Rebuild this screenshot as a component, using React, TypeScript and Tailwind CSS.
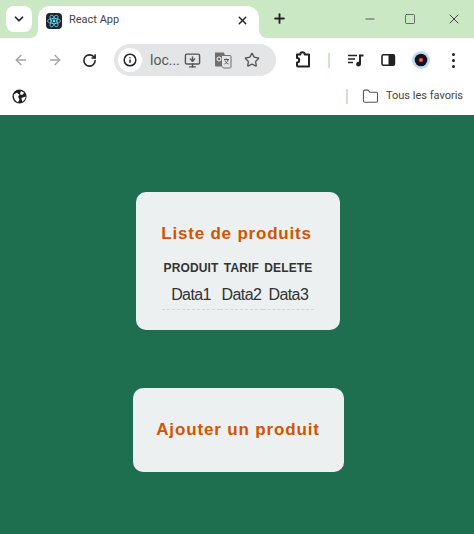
import React from 'react';
import { ArrowLeft, ArrowRight, ChevronDown, Folder, Info, Minus, MonitorDown, Plus, RotateCw, Square, Star, X } from 'lucide-react';

const ReactFavicon = () => (
  <svg width="16" height="16" viewBox="0 0 16 16" className="rounded-sm bg-[#20232a] shrink-0">
    <g fill="none" stroke="#61dafb" strokeWidth="0.8">
      <ellipse cx="8" cy="8" rx="6.5" ry="2.6" />
      <ellipse cx="8" cy="8" rx="6.5" ry="2.6" transform="rotate(60 8 8)" />
      <ellipse cx="8" cy="8" rx="6.5" ry="2.6" transform="rotate(120 8 8)" />
    </g>
    <circle cx="8" cy="8" r="1.4" fill="#61dafb" />
  </svg>
);

const TranslateIcon = () => (
  <svg width="18" height="18" viewBox="0 0 18 18" className="shrink-0">
    <path d="M1 1.5h9l1 3h-4v11H2a1 1 0 0 1-1-1z" fill="#6f6f6f" />
    <path d="M7.5 4.5H16a1 1 0 0 1 1 1V16a1 1 0 0 1-1 1H9.5L7.5 15z" fill="#e4e4e4" stroke="#6f6f6f" strokeWidth="1" />
    <circle cx="5" cy="8" r="2" fill="none" stroke="#fff" strokeWidth="1" />
    <path d="M10 8.5h5M12.5 7.5v1M14 8.5c-.5 2.500-2 4-3.500 4.500M11 9.500c.5 1.500 2 3 3.500 3.500" fill="none" stroke="#555" strokeWidth="1" />
  </svg>
);

const GlobeIcon = () => (
  <svg width="15" height="15" viewBox="0 0 16 16" className="shrink-0">
    <circle cx="8" cy="8" r="7.500" fill="#1f1f1f" />
    <path d="M2 5.500 5.500 4 8 6 6.500 8.500 8 11l-1.500 3C4 13.500 1.500 10 2 5.500zM9.500 2l3.500 2-2 2.500-2.500-1zM10 9.500 14.500 8c0 2.500-1.500 4.500-3.500 5.500z" fill="#fff" />
  </svg>
);

const PuzzleIcon = () => (
  <svg width="18" height="18" viewBox="0 0 18 18" fill="none" stroke="#222" strokeWidth="2" strokeLinejoin="round" className="shrink-0">
    <path d="M3 3.500H6.300a2.200 2.200 0 0 1 4.400 0H15V15.500H4a1 1 0 0 1-1-1V11.500a2.200 2.200 0 0 0 0-4.400z" />
  </svg>
);

const QueueMusicIcon = () => (
  <svg width="17" height="16" viewBox="0 0 17 16" className="shrink-0">
    <path d="M1 3.500h9M1 7h7M1 10.500h5" fill="none" stroke="#222" strokeWidth="1.700" />
    <path d="M12 2.500h4.500v2H14v7.500a2.400 2.400 0 1 1-2-2.300z" fill="#222" />
  </svg>
);

const SidePanelIcon = () => (
  <svg width="16" height="16" viewBox="0 0 16 16" className="shrink-0">
    <rect x="2" y="2.800" width="12.400" height="10.400" rx="1.500" fill="#fff" stroke="#222" strokeWidth="1.600" />
    <rect x="8.500" y="2.800" width="5.900" height="10.400" fill="#222" />
  </svg>
);

const ProfileIcon = () => (
  <svg width="18" height="18" viewBox="0 0 20 20" className="shrink-0">
    <circle cx="10" cy="10" r="10" fill="#bcdcf2" />
    <circle cx="10" cy="10" r="7" fill="#14141c" />
    <circle cx="10" cy="10" r="2.500" fill="#d2353f" />
    <circle cx="10" cy="10" r="0.800" fill="#f3e3c8" />
  </svg>
);

const App: React.FC = () => {
  return (
    <div className="w-[474px] h-[534px] flex flex-col overflow-hidden font-['Liberation_Sans',Arial,sans-serif]">
      {/* Tab strip */}
      <div className="h-[38px] bg-[#cbe8c4] flex items-start pl-[6px] shrink-0">
        <div className="mt-[6px] w-[26px] h-[26px] bg-white rounded-lg flex items-center justify-center">
          <ChevronDown className="w-[14px] h-[14px] text-[#222]" strokeWidth={3} />
        </div>
        <div className="relative ml-[6px] mt-[6px] w-[221px] h-[32px] bg-white rounded-t-xl flex items-center pl-[8px] pr-[9px] pb-[3px]">
          {/* flared tab feet */}
          <span className="absolute -left-2 bottom-0 w-2 h-2 bg-white">
            <span className="block w-full h-full bg-[#cbe8c4] rounded-br-lg" />
          </span>
          <span className="absolute -right-2 bottom-0 w-2 h-2 bg-white">
            <span className="block w-full h-full bg-[#cbe8c4] rounded-bl-lg" />
          </span>
          <ReactFavicon />
          <span className="ml-[7px] text-[11px] text-[#444] font-['Roboto',sans-serif]">React App</span>
          <X className="w-[13px] h-[13px] ml-auto mr-[1px] text-[#222]" strokeWidth={2.500} />
        </div>
        <Plus className="w-[15px] h-[15px] ml-[13px] mt-[11px] text-[#222]" strokeWidth={3} />
        <Minus className="w-[14px] h-[14px] ml-[76px] mt-[12px] text-[#444]" strokeWidth={1.500} />
        <Square className="w-[12px] h-[12px] ml-[27px] mt-[13px] text-[#444]" strokeWidth={1.500} />
        <X className="w-[16px] h-[16px] ml-[30px] mt-[11px] text-[#444]" strokeWidth={1.500} />
      </div>

      {/* Toolbar */}
      <div className="h-[39px] pt-[5px] bg-white flex items-center pl-[13px] shrink-0">
        <ArrowLeft className="w-[16px] h-[16px] text-[#a4a4a4]" strokeWidth={2} />
        <ArrowRight className="w-[16px] h-[16px] ml-[18px] text-[#a4a4a4]" strokeWidth={2} />
        <RotateCw className="w-[15px] h-[15px] ml-[19px] text-[#222]" strokeWidth={2.500} />
        <div className="ml-[17px] w-[162px] h-[32px] rounded-full bg-[#e4e5e6] flex items-center pl-[4px]">
          <div className="w-[24px] h-[24px] rounded-full bg-white flex items-center justify-center">
            <Info className="w-[14px] h-[14px] text-[#222]" strokeWidth={2.500} />
          </div>
          <span className="ml-[8px] w-[31px] text-[14px] text-[#555] font-['Roboto',sans-serif]">loc...</span>
          <MonitorDown className="w-[17px] h-[17px] ml-[3px] text-[#555]" strokeWidth={2} />
          <div className="ml-[13px]"><TranslateIcon /></div>
          <Star className="w-[16px] h-[16px] ml-[12px] text-[#555]" strokeWidth={2} />
        </div>
        <div className="ml-[18px]"><PuzzleIcon /></div>
        <div className="ml-[16px] w-[2px] h-[15px] bg-[#cbe8c4]" />
        <div className="ml-[17px]"><QueueMusicIcon /></div>
        <div className="ml-[16px]"><SidePanelIcon /></div>
        <div className="ml-[16px]"><ProfileIcon /></div>
        <div className="ml-[22px] flex flex-col gap-[3px]">
          <span className="w-[3px] h-[3px] rounded-full bg-[#222]" />
          <span className="w-[3px] h-[3px] rounded-full bg-[#222]" />
          <span className="w-[3px] h-[3px] rounded-full bg-[#222]" />
        </div>
      </div>

      {/* Bookmarks bar */}
      <div className="h-[38px] bg-white flex items-center pl-[12px] shrink-0">
        <GlobeIcon />
        <div className="ml-auto w-[2px] h-[15px] bg-[#cbe8c4]" />
        <Folder className="w-[17px] h-[17px] ml-[14px] text-[#555]" strokeWidth={1.500} />
        <span className="ml-[7px] mr-[11px] text-[11px] text-[#444] font-['Roboto',sans-serif]">Tous les favoris</span>
      </div>

      {/* Page */}
      <div className="flex-1 bg-[#1e6f4f] flex flex-col items-center pl-[2px] pt-[77px]">
        <div className="w-[204px] h-[138px] bg-[#ecf0f1] rounded-[10px] flex flex-col items-center pt-[31px]">
          <h2 className="mr-[3px] text-[17px] leading-[22px] font-bold tracking-[0.8px] text-[#d35400]">Liste de produits</h2>
          <table className="mt-[15px] border-b border-dashed border-[#d4d4d4] border-collapse">
            <thead>
              <tr className="text-[12px] leading-[16px] font-bold text-[#333] tracking-[0.15px]">
                <th className="px-[1.5px] py-0 font-bold">PRODUIT</th>
                <th className="px-[1.5px] py-0 font-bold">TARIF</th>
                <th className="px-[1.5px] py-0 font-bold">DELETE</th>
              </tr>
            </thead>
            <tbody>
              <tr className="text-[16px] leading-[22px] tracking-[-0.6px] text-[#333] text-center">
                <td className="px-[1.5px] pt-[8px] pb-[3px]">Data1</td>
                <td className="px-[1.5px] pt-[8px] pb-[3px]">Data2</td>
                <td className="px-[1.5px] pt-[8px] pb-[3px]">Data3</td>
              </tr>
            </tbody>
          </table>
        </div>
        <div className="mt-[58px] w-[211px] h-[84px] bg-[#ecf0f1] rounded-[10px] flex items-center justify-center">
          <h2 className="text-[17px] font-bold tracking-[0.85px] text-[#d35400]">Ajouter un produit</h2>
        </div>
      </div>
    </div>
  );
};

export default App;
